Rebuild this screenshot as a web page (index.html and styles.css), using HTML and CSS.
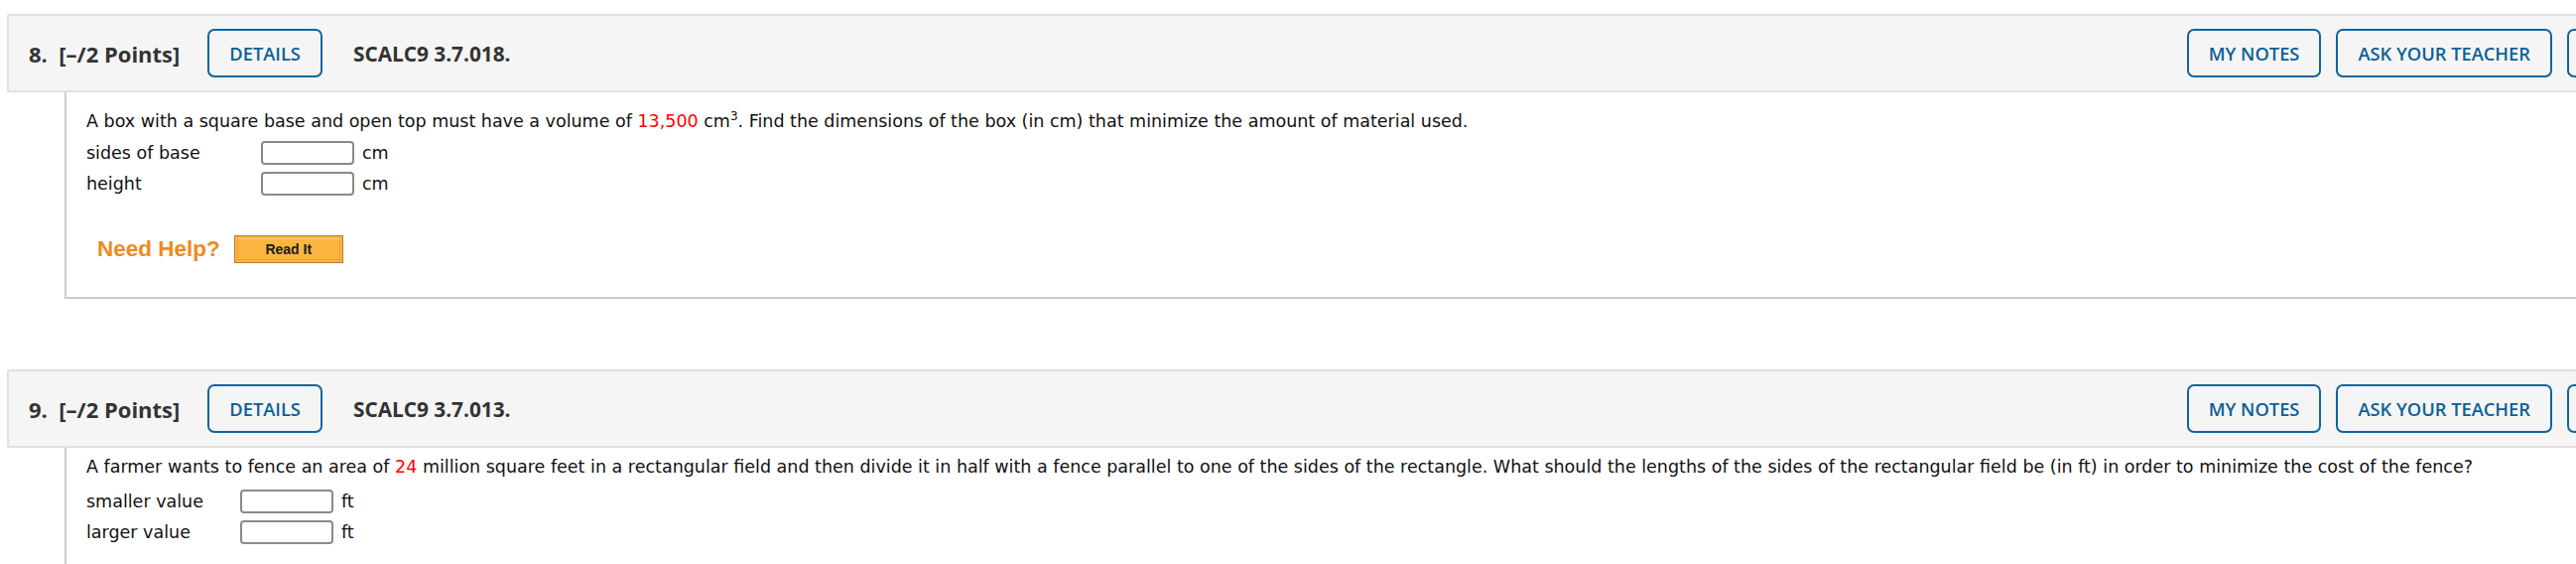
FILE: index.html
```html
<!DOCTYPE html>
<html>
<head>
<meta charset="utf-8">
<link rel="stylesheet" href="styles.css">
</head>
<body>
<div class="question q8">
  <div class="qhead">
    <span class="qnum">8.&nbsp;&nbsp;[–/2 Points]</span>
    <span class="btn details">DETAILS</span>
    <span class="qcode">SCALC9 3.7.018.</span>
    <div class="actions">
      <span class="btn">MY NOTES</span>
      <span class="btn">ASK YOUR TEACHER</span>
      <span class="btn more">PRACTICE ANOTHER</span>
    </div>
  </div>
  <div class="qbody">
    <p class="prompt">A box with a square base and open top must have a volume of <span class="red">13,500</span> cm<sup>3</sup>. Find the dimensions of the box (in cm) that minimize the amount of material used.</p>
    <div class="answers wide">
      <span class="label">sides of base</span><span class="field"></span><span class="unit">cm</span>
      <span class="label">height</span><span class="field"></span><span class="unit">cm</span>
    </div>
    <div class="help">
      <span class="need">Need Help?</span>
      <span class="readit"><span class="readit-inner">Read It</span></span>
    </div>
  </div>
</div>

<div class="question q9">
  <div class="qhead">
    <span class="qnum">9.&nbsp;&nbsp;[–/2 Points]</span>
    <span class="btn details">DETAILS</span>
    <span class="qcode">SCALC9 3.7.013.</span>
    <div class="actions">
      <span class="btn">MY NOTES</span>
      <span class="btn">ASK YOUR TEACHER</span>
      <span class="btn more">PRACTICE ANOTHER</span>
    </div>
  </div>
  <div class="qbody open">
    <p class="prompt">A farmer wants to fence an area of <span class="red">24</span> million square feet in a rectangular field and then divide it in half with a fence parallel to one of the sides of the rectangle. What should the lengths of the sides of the rectangular field be (in ft) in order to minimize the cost of the fence?</p>
    <div class="answers narrow">
      <span class="label">smaller value</span><span class="field"></span><span class="unit">ft</span>
      <span class="label">larger value</span><span class="field"></span><span class="unit">ft</span>
    </div>
  </div>
</div>
</body>
</html>
```

FILE: styles.css
```css
html, body {
  margin: 0;
  padding: 0;
  overflow: hidden;
  background: #ffffff;
}

body {
  font-family: "DejaVu Sans", Verdana, sans-serif;
  font-size: 17.5px;
  color: #111;
}

.question {
  width: 2817px;
  margin-left: 7px;
}

.q8 {
  margin-top: 14px;
}

.q9 {
  margin-top: 71px;
}

.qhead {
  display: flex;
  align-items: center;
  height: 75px;
  padding: 0 15px 0 20px;
  background: #f5f5f5;
  border: 2px solid #e0e0e0;
  border-radius: 2px;
  font-family: "Open Sans", sans-serif;
  color: #333;
}

.qnum {
  font-size: 22px;
  font-weight: 700;
  white-space: pre;
}

.qcode {
  font-size: 20.8px;
  font-weight: 700;
  margin-left: 31px;
}

.btn {
  display: inline-flex;
  align-items: center;
  justify-content: center;
  box-sizing: border-box;
  height: 49px;
  padding: 0 20px;
  border: 2px solid #0f659f;
  border-radius: 7px;
  color: #0c6097;
  font-size: 18.3px;
  font-weight: 600;
  white-space: nowrap;
}

.btn.more {
  width: 220px;
  justify-content: flex-start;
  overflow: hidden;
}

.details {
  margin-left: 28px;
}

.actions {
  display: flex;
  gap: 15px;
  margin-left: auto;
}

.qbody {
  margin-left: 58px;
  border-left: 2px solid #cccccc;
  border-bottom: 2px solid #cccccc;
  padding: 17px 0 34px 20px;
}

.qbody .prompt {
  margin-bottom: 8px;
}

.qbody.open {
  border-bottom: none;
  padding-top: 7px;
  padding-bottom: 40px;
}

.qbody.open .prompt {
  margin-bottom: 11px;
}

.prompt {
  margin: 0;
  line-height: 24px;
}

.red {
  color: #f00;
}

sup {
  font-size: 12px;
  line-height: 0;
}

.answers {
  display: grid;
  align-items: center;
  row-gap: 7px;
}

.answers.wide {
  grid-template-columns: 176px 94px auto;
}

.answers.narrow {
  grid-template-columns: 155px 94px auto;
}

.field {
  display: block;
  box-sizing: border-box;
  width: 94px;
  height: 24px;
  border: 2px solid #8a8a8a;
  border-radius: 4px;
  background: #fff;
}

.unit {
  margin-left: 8px;
}

.help {
  display: flex;
  align-items: center;
  margin-top: 40px;
  margin-left: 11px;
}

.need {
  font-family: "Liberation Sans", Arial, sans-serif;
  font-weight: 700;
  font-size: 22.5px;
  color: #ef8a1c;
}

.readit {
  display: inline-block;
  margin-left: 14px;
  width: 110px;
  height: 28px;
  box-sizing: border-box;
  border: 1px solid #b9782f;
  background: #fbb642;
  padding: 2px;
}

.readit-inner {
  display: flex;
  align-items: center;
  justify-content: center;
  box-sizing: border-box;
  height: 100%;
  border: 1px solid #f79a26;
  border-top-color: #fdd07f;
  font-family: "Liberation Sans", Arial, sans-serif;
  font-weight: 700;
  font-size: 14px;
  color: #1a1a1a;
}
```
